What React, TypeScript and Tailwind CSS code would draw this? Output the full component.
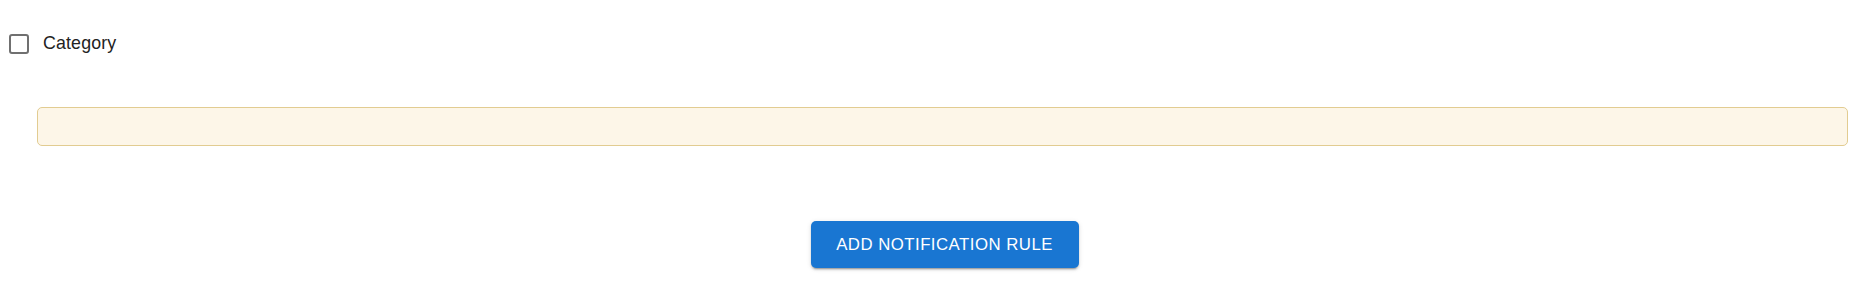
import React, { useState } from 'react';

const App: React.FC = () => {
  const [checked, setChecked] = useState(false);

  return (
    <div className="w-[1874px] h-[281px] bg-white font-['Liberation_Sans',Arial,sans-serif]">
      <div className="pt-[34px] pl-[9px]">
        <label className="flex items-center h-[20px] cursor-pointer select-none">
          <button
            type="button"
            onClick={() => setChecked(!checked)}
            className={`w-[20px] h-[20px] rounded-[3px] border-[2.6px] ${checked ? 'bg-[#1976d2] border-[#1976d2]' : 'border-[#707070]'}`}
          />
          <span className="ml-[14px] text-[17.8px] leading-none text-[#222222] tracking-[0.15px]">Category</span>
        </label>
      </div>

      <div className="ml-[37px] mr-[26px] mt-[53px]">
        <div className="h-[39px] rounded-[5px] border border-[#e2cc91] bg-[#fdf6e8]" />

        <div className="flex justify-center mt-[75px] pl-[4px]">
          <button
            type="button"
            className="w-[268px] h-[47px] rounded-[5px] bg-[#1976d2] text-white text-[16.8px] tracking-[0.48px] uppercase shadow-[0px_3px_1px_-2px_rgba(0,0,0,0.2),0px_2px_2px_0px_rgba(0,0,0,0.14),0px_1px_5px_0px_rgba(0,0,0,0.12)]"
          >
            Add Notification Rule
          </button>
        </div>
      </div>
    </div>
  );
};

export default App;
